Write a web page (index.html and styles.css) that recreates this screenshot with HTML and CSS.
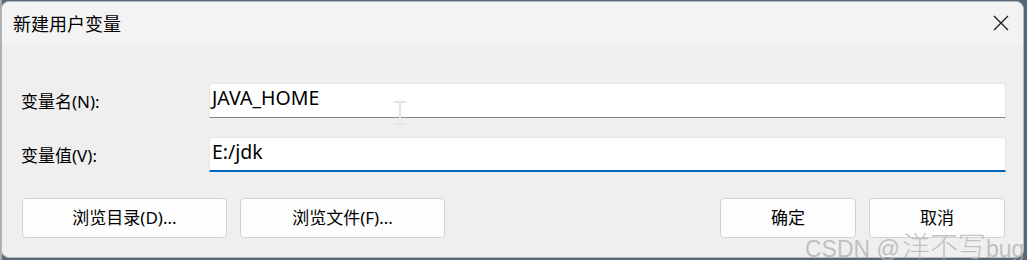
FILE: index.html
```html
<!DOCTYPE html>
<html lang="zh-CN">
<head>
<meta charset="utf-8">
<title>新建用户变量</title>
<link rel="stylesheet" href="styles.css">
</head>
<body>
<div class="window">
  <div class="titlebar">
    <span class="title">新建用户变量</span>
    <span class="close">
      <svg width="16" height="16" viewBox="0 0 16 16"><path d="M1 1 L15 15 M15 1 L1 15" stroke="#1a1a1a" stroke-width="1.3" fill="none"/></svg>
    </span>
  </div>
  <div class="content">
    <div class="row">
      <label class="label">变量名(N):</label>
      <div class="input">JAVA_HOME</div>
    </div>
    <div class="row">
      <label class="label">变量值(V):</label>
      <div class="input focused">E:/jdk</div>
    </div>
    <div class="buttons">
      <div class="group">
        <button class="btn wide">浏览目录(D)...</button>
        <button class="btn wide">浏览文件(F)...</button>
      </div>
      <div class="group">
        <button class="btn">确定</button>
        <button class="btn">取消</button>
      </div>
    </div>
  </div>
</div>
<div class="ibeam">
  <svg width="14" height="24" viewBox="0 0 14 24"><path d="M1 1 H13 M7 1 V23 M1 23 H13" stroke="#e6e6e6" stroke-width="2" fill="none"/></svg>
</div>
<div class="watermark">CSDN @<span class="wm-cjk">洋不写</span>bug</div>
</body>
</html>
```

FILE: styles.css
```css
html, body {
  margin: 0;
  padding: 0;
}
body {
  width: 1027px;
  height: 260px;
  background: linear-gradient(to right, #a9adb2 0, #a9adb2 2px, #56687a 2px);
  overflow: hidden;
  position: relative;
  font-family: "Noto Sans", "Noto Sans CJK SC", sans-serif;
  color: #000;
}
.window {
  box-sizing: border-box;
  width: 1023px;
  height: 257px;
  margin: 1px 0 0 1px;
  border: 1px solid #b9b9b9;
  border-radius: 8px;
  background: #efefef;
  overflow: hidden;
  display: flex;
  flex-direction: column;
}
.titlebar {
  height: 43px;
  flex: none;
  background: #f3f3f3;
  display: flex;
  align-items: center;
  justify-content: space-between;
  padding: 0 14px 0 11px;
}
.title {
  font-family: "Noto Sans CJK SC", sans-serif;
  font-size: 18px;
  line-height: 20px;
  margin-top: -2px;
}
.close {
  display: flex;
  width: 16px;
  height: 16px;
  margin-top: -1px;
}
.content {
  padding: 38px 17px 0 19px;
  display: flex;
  flex-direction: column;
}
.row {
  display: flex;
  align-items: center;
  height: 35px;
  margin-bottom: 19px;
}
.label {
  width: 188px;
  flex: none;
  font-size: 17px;
  line-height: 20px;
  font-family: "Noto Sans", "Noto Sans CJK SC", sans-serif;
  padding-top: 2px;
}
.input {
  flex: 1;
  box-sizing: border-box;
  height: 35px;
  background: #fff;
  border: 1px solid #e6e6e6;
  border-bottom: 1px solid #878787;
  border-radius: 3px 3px 0 0;
  font-size: 19.5px;
  line-height: 30px;
  padding: 0 0 0 2px;
  display: flex;
  align-items: center;
  padding-bottom: 6px;
}
.input.focused {
  border-bottom: 2px solid #0067c0;
  padding-bottom: 5px;
}
.buttons {
  display: flex;
  justify-content: space-between;
  margin-top: 7px;
  padding: 0 1px 0 1px;
}
.group {
  display: flex;
  gap: 13px;
}
.btn {
  box-sizing: border-box;
  width: 136px;
  height: 40px;
  background: #fdfdfd;
  border: 1px solid #d2d2d2;
  border-radius: 4px;
  font-family: "Noto Sans", "Noto Sans CJK SC", sans-serif;
  font-size: 17px;
  line-height: 20px;
  color: #000;
  padding: 0;
}
.btn.wide {
  width: 205px;
}
.ibeam {
  position: absolute;
  left: 393px;
  top: 101px;
  width: 14px;
  height: 24px;
}
.watermark {
  position: absolute;
  left: 805px;
  top: 231px;
  font-family: "Liberation Sans", "Noto Sans CJK SC", sans-serif;
  font-size: 23px;
  line-height: 28px;
  color: rgba(175, 175, 175, 0.75);
  white-space: nowrap;
}
.wm-cjk {
  font-size: 28px;
  font-family: "Noto Sans CJK SC", sans-serif;
  font-weight: 300;
  margin-left: 2px;
}
```
